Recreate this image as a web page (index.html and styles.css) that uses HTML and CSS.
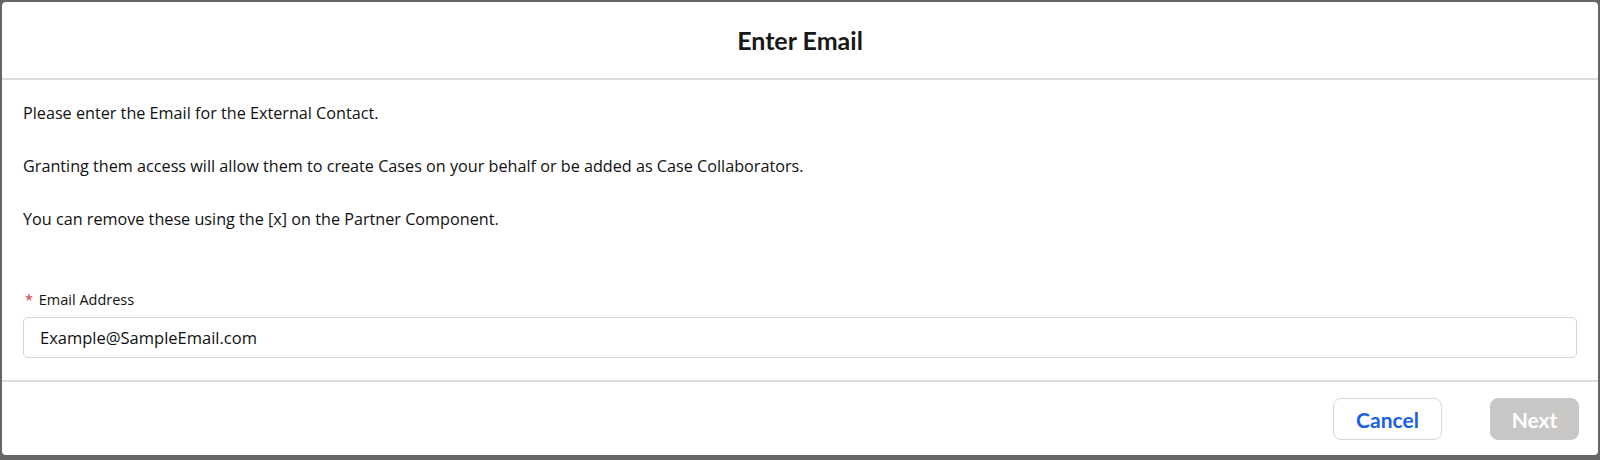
FILE: index.html
```html
<!DOCTYPE html>
<html lang="en">
<head>
  <meta charset="UTF-8">
  <title>Enter Email</title>
  <meta name="viewport" content="width=device-width,initial-scale=1">
  <link rel="stylesheet" href="styles.css">
</head>
<body>

<div class="modal">

  <!-- header -->
  <header class="modal-header">
    <h2>Enter Email</h2>
  </header>

  <!-- body -->
  <div class="modal-body">
    <p>Please enter the Email for the External Contact.</p>
    <p>Granting them access will allow them to create Cases on your behalf or be added as Case Collaborators.</p>
    <p>You can remove these using the [x] on the Partner Component.</p>

    <div class="field">
      <label for="email"><abbr title="required">*</abbr> Email Address</label>
      <input id="email" type="email" value="Example@SampleEmail.com">
    </div>
  </div>

  <!-- footer -->
  <footer class="modal-footer">
    <button class="btn btn-neutral">Cancel</button>
    <button class="btn btn-brand" disabled>Next</button>
  </footer>

</div>

</body>
</html>
```

FILE: styles.css
```css
html, body { margin:0; height:100%; }
body { background:#666; font-family:'Open Sans','Noto Sans',sans-serif; color:#111; padding:2px; box-sizing:border-box; }
.modal { background:#fff; border-radius:4px; height:453px; display:flex; flex-direction:column; }

.modal-header { height:76px; border-bottom:2px solid #dcdcdc; display:flex; align-items:center; justify-content:center; }
.modal-header h2 { margin:0; font-family:Lato,sans-serif; font-size:25px; font-weight:700; color:#181818; }

.modal-body { flex:1; padding:21px 21px 0; }
.modal-body p { margin:0 0 28px; font-size:16.2px; line-height:25px; }

.field { margin-top:58px; }
.field label { display:block; font-size:14.5px; line-height:20px; margin-bottom:7px; padding-left:2px; }
.field abbr { color:#c23934; text-decoration:none; border:0; margin-right:2px; }
.field input { width:100%; box-sizing:border-box; height:41px; border:1px solid #d4d4d4; border-radius:5px; padding:0 16px; font-family:inherit; font-size:16.5px; color:#111; }

.modal-footer { border-top:2px solid #dcdcdc; padding:16px 19px 15px 20px; display:flex; justify-content:flex-end; gap:48px; }
.btn { height:42px; border-radius:8px; font-family:Lato,sans-serif; font-size:21px; font-weight:700; padding:0 20px; }
.btn-neutral { background:#fff; border:1px solid #d8d8d8; color:#1b5fe3; width:109px; }
.btn-brand { background:#c9c7c5; border:1px solid #c9c7c5; color:#fff; width:89px; }
```
